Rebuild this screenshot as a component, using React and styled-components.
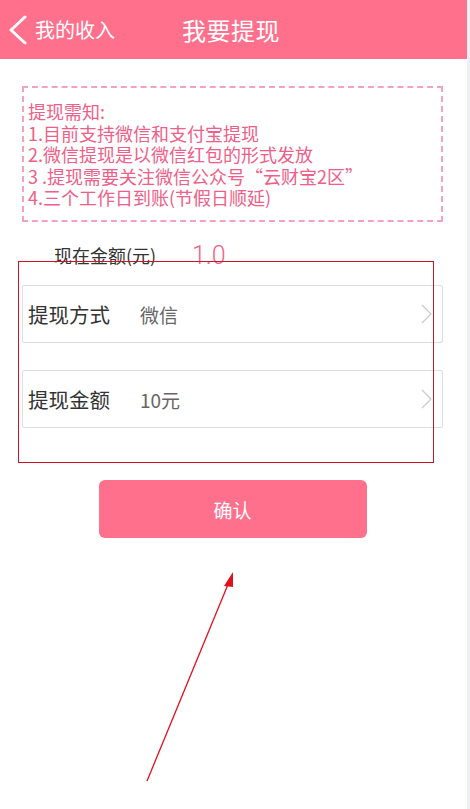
import React from "react";
import styled, { createGlobalStyle } from "styled-components";

const GlobalStyle = createGlobalStyle`
  html, body {
    margin: 0;
    padding: 0;
    background: #ffffff;
    font-family: "Noto Sans CJK SC", "Noto Sans", Roboto, sans-serif;
  }
`;

const Page = styled.div`
  position: relative;
  width: 470px;
  height: 809px;
  display: flex;
  overflow: hidden;
  background: #ffffff;
`;

const Screen = styled.div`
  flex: 1;
  display: flex;
  flex-direction: column;
`;

const EdgeStrip = styled.div`
  width: 3px;
  background: #eef0f6;
`;

const Header = styled.header`
  height: 59px;
  background: #ff708c;
  display: flex;
  align-items: center;
  color: #ffffff;
`;

const BackButton = styled.div`
  display: flex;
  align-items: center;
  padding-left: 8px;
  gap: 7px;
  font-size: 20px;
  line-height: 1;
`;

const Title = styled.h1`
  flex: 1;
  margin: 0 0 0 -120px;
  text-align: center;
  font-size: 24px;
  font-weight: 400;
  letter-spacing: 0.5px;
`;

const Body = styled.main`
  padding: 27px 24px 0 22px;
  display: flex;
  flex-direction: column;
`;

const Notice = styled.div`
  height: 136px;
  box-sizing: border-box;
  border: 2px dashed #f3a3bd;
  padding: 13px 0 0 4px;
  color: #ee6088;
  font-size: 18px;
  line-height: 21.5px;
`;

const NoticeLine = styled.div`
  white-space: nowrap;
  height: 21.5px;
`;

const Balance = styled.div`
  display: flex;
  align-items: center;
  height: 34px;
  margin-top: 16px;
  padding-left: 32px;
`;

const BalanceLabel = styled.span`
  font-size: 18px;
  color: #333333;
  width: 106px;
`;

const BalanceValue = styled.span`
  font-family: Roboto, "Noto Sans", sans-serif;
  font-weight: 300;
  font-size: 25px;
  color: #f0658a;
  margin-left: 32px;
`;

const Rows = styled.div`
  margin-top: 13px;
  display: flex;
  flex-direction: column;
  gap: 27px;
`;

const Row = styled.div`
  height: 58px;
  box-sizing: border-box;
  border: 1px solid #dedede;
  border-radius: 2px;
  display: flex;
  align-items: center;
  padding: 0 10px 0 5px;
`;

const RowLabel = styled.span`
  font-size: 20.5px;
  color: #333333;
  width: 112px;
`;

const RowValue = styled.span`
  flex: 1;
  font-size: 19px;
  color: #666666;
`;

const ConfirmButton = styled.button`
  align-self: center;
  margin-top: 52px;
  width: 268px;
  height: 58px;
  border: none;
  border-radius: 6px;
  background: #ff708c;
  color: #ffffff;
  font-family: inherit;
  font-size: 19px;
  cursor: pointer;
`;

const Highlight = styled.div`
  position: absolute;
  left: 18px;
  top: 261px;
  width: 414px;
  height: 200px;
  border: 1px solid #c81626;
  pointer-events: none;
`;

const ArrowLayer = styled.svg`
  position: absolute;
  left: 0;
  top: 0;
  pointer-events: none;
`;

const Chevron = () => (
  <svg width="11" height="20" viewBox="0 0 11 20">
    <path d="M1 1 L10 10 L1 19" fill="none" stroke="#cccccc" strokeWidth="1.3" />
  </svg>
);

const notices = [
  "提现需知:",
  "1.目前支持微信和支付宝提现",
  "2.微信提现是以微信红包的形式发放",
  "3 .提现需要关注微信公众号“云财宝2区”",
  "4.三个工作日到账(节假日顺延)",
];

export default function App() {
  return (
    <>
      <GlobalStyle />
      <Page>
        <Screen>
          <Header>
            <BackButton>
              <svg width="20" height="30" viewBox="0 0 20 30">
                <path d="M17 2 L3 15 L17 28" fill="none" stroke="#ffffff" strokeWidth="3" strokeLinecap="round" strokeLinejoin="round" />
              </svg>
              <span>我的收入</span>
            </BackButton>
            <Title>我要提现</Title>
          </Header>
          <Body>
            <Notice>
              {notices.map((line) => (
                <NoticeLine key={line}>{line}</NoticeLine>
              ))}
            </Notice>
            <Balance>
              <BalanceLabel>现在金额(元)</BalanceLabel>
              <BalanceValue>1.0</BalanceValue>
            </Balance>
            <Rows>
              <Row>
                <RowLabel>提现方式</RowLabel>
                <RowValue>微信</RowValue>
                <Chevron />
              </Row>
              <Row>
                <RowLabel>提现金额</RowLabel>
                <RowValue>10元</RowValue>
                <Chevron />
              </Row>
            </Rows>
            <ConfirmButton>确认</ConfirmButton>
          </Body>
        </Screen>
        <EdgeStrip />
        <Highlight />
        <ArrowLayer width="470" height="809" viewBox="0 0 470 809">
          <line x1="147" y1="781" x2="229" y2="582" stroke="#e0101c" strokeWidth="1.3" />
          <polygon points="233,572 224,586 233,587" fill="#e0101c" />
        </ArrowLayer>
      </Page>
    </>
  );
}
